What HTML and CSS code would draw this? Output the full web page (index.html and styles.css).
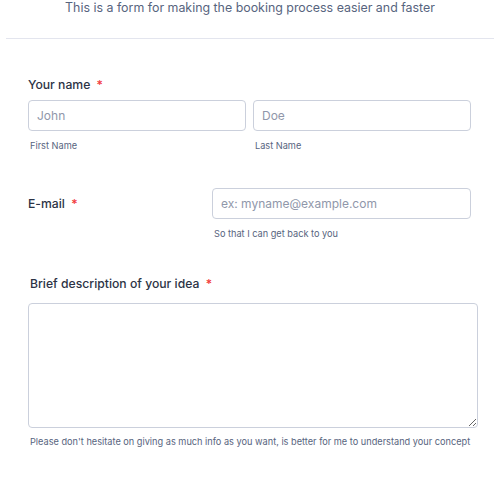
FILE: index.html
```html
<!DOCTYPE html>
<html>
<head>
<meta charset="utf-8">
<link rel="stylesheet" href="styles.css">
</head>
<body>
<div class="page">
  <p class="subheader">This is a form for making the booking process easier and faster</p>
  <hr class="divider">
  <div class="form">
    <div class="field field-name">
      <label class="label">Your name <span class="req">*</span></label>
      <div class="name-row">
        <div class="sub">
          <input class="input" type="text" placeholder="John">
          <span class="sublabel">First Name</span>
        </div>
        <div class="sub">
          <input class="input" type="text" placeholder="Doe">
          <span class="sublabel">Last Name</span>
        </div>
      </div>
    </div>
    <div class="field field-email">
      <label class="label label-side">E-mail <span class="req">*</span></label>
      <div class="email-col">
        <input class="input" type="email" placeholder="ex: myname@example.com">
        <span class="sublabel">So that I can get back to you</span>
      </div>
    </div>
    <div class="field field-desc">
      <label class="label label-desc">Brief description of your idea <span class="req">*</span></label>
      <textarea class="textarea"></textarea>
      <span class="sublabel">Please don't hesitate on giving as much info as you want, is better for me to understand your concept</span>
    </div>
  </div>
</div>
</body>
</html>
```
FILE: styles.css
```css
* { box-sizing: border-box; }
html, body { margin: 0; padding: 0; background: #ffffff; }
body { font-family: Inter, "Noto Sans", sans-serif; color: #2c3345; }
.page { width: 500px; }
.subheader {
  margin: 0;
  text-align: center;
  font-size: 12.4px;
  line-height: 16px;
  padding-top: 0;
  color: #57647e;
}
.divider {
  margin: 22px 6px 0;
  border: 0;
  border-top: 1px solid #e3e5ee;
  height: 0;
}
.form { padding: 0 28px; }
.label {
  display: block;
  font-size: 12.2px;
  line-height: 16px;
  font-weight: 500;
  color: #2c3345;
}
.req { color: #f23a3c; margin-left: 3px; }
.field-name { padding-top: 38px; }
.field-name .label { margin-bottom: 7px; }
.name-row { display: flex; gap: 7px; width: 443px; }
.sub { flex: 1; display: flex; flex-direction: column; }
.input {
  display: block;
  width: 100%;
  height: 31px;
  border: 1px solid #cbd0dc;
  border-radius: 4px;
  padding: 0 8px;
  font-family: inherit;
  font-size: 12px;
  color: #2c3345;
  background: #fff;
  outline: none;
}
.input::placeholder { color: #9097aa; }
.sublabel {
  display: block;
  font-size: 9.2px;
  line-height: 12px;
  color: #57647e;
  margin-top: 9px;
  padding-left: 2px;
}
.field-email {
  display: flex;
  align-items: flex-start;
  margin-top: 36px;
}
.label-side { width: 184px; padding-top: 8px; }
.email-col { width: 259px; display: flex; flex-direction: column; }
.field-desc { margin-top: 36px; }
.label-desc { padding-left: 2px; margin-bottom: 11px; }
.textarea {
  display: block;
  width: 450px;
  height: 125px;
  border: 1px solid #cbd0dc;
  border-radius: 4px;
  resize: vertical;
  font-family: inherit;
  outline: none;
}
.field-desc .sublabel { margin-top: 8px; }
```
